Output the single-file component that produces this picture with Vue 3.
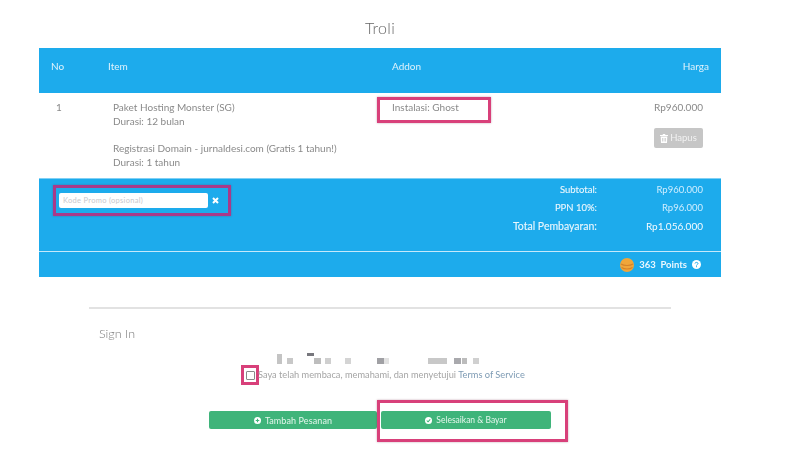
<script setup>
const blocks = [
  { w: 5, h: 10, m: 0, c: '#c4c4c4' },
  { w: 6, h: 6, m: 5, c: '#c8c8c8' },
  { w: 7, h: 3, m: 14, c: '#77777d', top: true },
  { w: 7, h: 6, m: 0, c: '#bdbdbd' },
  { w: 6, h: 6, m: 4, c: '#cfcfcf' },
  { w: 6, h: 6, m: 14, c: '#d4d4d4' },
  { w: 7, h: 6, m: 26, c: '#a0a0a4' },
  { w: 5, h: 6, m: 0, c: '#e2e2e2' },
  { w: 19, h: 6, m: 39, c: '#c8c8c8' },
  { w: 7, h: 6, m: 7, c: '#a9a9ad' },
  { w: 5, h: 6, m: 1, c: '#bcbcbc' },
  { w: 6, h: 6, m: 6, c: '#d0d0d0' }
]
</script>

<template>
  <div class="page">
    <h1 class="title">Troli</h1>

    <section class="cart">
      <div class="row head">
        <div class="c-no">No</div>
        <div class="c-item">Item</div>
        <div class="c-addon">Addon</div>
        <div class="c-price">Harga</div>
      </div>

      <div class="row body">
        <div class="c-no num">1</div>
        <div class="c-item item-text">
          <p>Paket Hosting Monster (SG)<br />Durasi: 12 bulan</p>
          <p>Registrasi Domain - jurnaldesi.com (Gratis 1 tahun!)<br />Durasi: 1 tahun</p>
        </div>
        <div class="c-addon addon-text">
          <span class="mark mark-addon"></span>
          Instalasi: Ghost
        </div>
        <div class="c-price price-cell">
          <div>Rp960.000</div>
          <button class="hapus" type="button">
            <svg width="8" height="9" viewBox="0 0 8 9"><path fill="#fff" d="M3 0h2l.5 1H8v1H0V1h2.5zM.7 2.6h6.600L7 9H1zM2.300 4v3.600h.7V4zm1.400 0v3.600h.7V4zm1.300 0v3.600h.7V4z" /></svg>
            Hapus
          </button>
        </div>
      </div>

      <div class="totals">
        <div class="promo">
          <span class="mark mark-promo"></span>
          <div class="promo-input">Kode Promo (opsional)</div>
          <svg class="promo-x" width="7" height="7" viewBox="0 0 7 7"><path d="M1 1l5 5M6 1L1 6" stroke="#fff" stroke-width="2" fill="none" /></svg>
        </div>
        <div class="sums">
          <div class="sum"><span>Subtotal:</span><span class="val">Rp960.000</span></div>
          <div class="sum"><span>PPN 10%:</span><span class="val">Rp96.000</span></div>
          <div class="sum big"><span>Total Pembayaran:</span><span class="val">Rp1.056.000</span></div>
        </div>
      </div>

      <div class="points">
        <svg class="coin" width="14" height="14" viewBox="0 0 14 14">
          <circle cx="7" cy="7" r="7" fill="#f0a63a" />
          <path d="M1 6c3 2 9 2 12 0M1.500 9.500c3 2 8 2 11 0" stroke="#d5822a" stroke-width="1.200" fill="none" />
        </svg>
        <span class="pts-text">363&nbsp; Points</span>
        <svg class="help" width="9" height="9" viewBox="0 0 9 9">
          <circle cx="4.500" cy="4.500" r="4.500" fill="#fff" />
          <path d="M3 3.500c0-1.500 3-1.500 3 0 0 1-1.500 1-1.500 2" stroke="#1dabec" stroke-width="1" fill="none" />
          <rect x="4" y="6.200" width="1" height="1" fill="#1dabec" />
        </svg>
      </div>
    </section>

    <section class="lower">
      <h2 class="signin">Sign In</h2>
      <div class="pixels">
        <i
          v-for="(b, i) in blocks"
          :key="i"
          :class="{ up: b.top }"
          :style="{ width: b.w + 'px', height: b.h + 'px', marginLeft: b.m + 'px', background: b.c }"
        ></i>
      </div>
      <div class="tos">
        <span class="check-wrap"><span class="check"></span></span>
        <span>Saya telah membaca, memahami, dan menyetujui <a>Terms of Service</a></span>
      </div>
      <div class="actions">
        <button class="btn add" type="button">
          <svg width="7" height="7" viewBox="0 0 8 8"><circle cx="4" cy="4" r="4" fill="#fff" /><path d="M4 2v4M2 4h4" stroke="#3fb47a" stroke-width="1.300" /></svg>
          Tambah Pesanan
        </button>
        <button class="btn pay" type="button">
          <span class="mark mark-pay"></span>
          <svg width="7" height="7" viewBox="0 0 8 8"><circle cx="4" cy="4" r="4" fill="#fff" /><path d="M2 4l1.500 1.500L6 2.700" stroke="#3fb47a" stroke-width="1.200" fill="none" /></svg>
          Selesaikan &amp; Bayar
        </button>
      </div>
    </section>
  </div>
</template>

<style>
html, body { margin: 0; background: #fff; }
</style>

<style scoped>
.page {
  width: 800px;
  height: 453px;
  overflow: hidden;
  box-sizing: border-box;
  padding: 0 79px 0 39px;
  font-family: Lato, "Open Sans", sans-serif;
  color: #8a8a8a;
  filter: blur(0.5px);
}
.title {
  margin: 0;
  height: 48px;
  padding-top: 18px;
  box-sizing: border-box;
  text-align: center;
  font-size: 16px;
  line-height: 20px;
  font-weight: 300;
  color: #666;
  letter-spacing: 0.3px;
}
.cart { width: 682px; }
.row { display: flex; font-size: 10px; line-height: 14px; }
.c-no { width: 69px; padding-left: 12px; box-sizing: border-box; }
.c-item { width: 284px; }
.c-addon { width: 199px; position: relative; }
.c-price { width: 130px; text-align: right; box-sizing: border-box; padding-right: 12px; }

.head { background: #1dabec; height: 45px; padding-top: 11px; box-sizing: border-box; color: #dff2fc; }
.body { height: 85px; padding-top: 7px; box-sizing: border-box; color: #8a8a8a; }
.num { padding-left: 17px; }
.item-text { padding-left: 5px; box-sizing: border-box; }
.item-text p { margin: 0 0 13px; }
.price-cell { padding-right: 18px; }
.mark {
  position: absolute;
  border: 3px solid #d8407a;
  box-sizing: border-box;
  box-shadow: 0 0 2px rgba(120, 40, 70, 0.4);
}
.mark-addon { left: -15px; top: -3px; width: 114px; height: 26px; }
.hapus {
  margin-top: 14px;
  width: 49px;
  height: 20px;
  padding: 0;
  border: 0;
  border-radius: 2px;
  background: #c6c6c6;
  color: #f2f2f2;
  font: inherit;
  font-size: 9.500px;
  display: inline-flex;
  align-items: center;
  justify-content: center;
  gap: 2px;
}

.totals {
  background: #1dabec;
  height: 73px;
  display: flex;
  justify-content: space-between;
  box-sizing: border-box;
  border-top: 1px solid #7fd0f5;
}
.promo {
  position: relative;
  margin: 14px 0 0 20px;
  display: flex;
  align-items: center;
  height: 15px;
  gap: 4px;
}
.mark-promo { left: -6px; top: -8px; width: 178px; height: 31px; border-color: #a93a8a; }
.promo-input {
  width: 149px;
  height: 15px;
  background: #fff;
  border-radius: 2px;
  font-size: 7.500px;
  line-height: 15px;
  padding-left: 4px;
  box-sizing: border-box;
  color: #c8c8cc;
  letter-spacing: 0.3px;
}
.sums { padding: 2px 18px 0 0; color: #eaf7fe; font-size: 9.500px; line-height: 18px; }
.sum { display: flex; justify-content: flex-end; -webkit-text-stroke: 0.1px #eaf7fe; }
.sum .val { width: 106px; text-align: right; color: #cfeeff; -webkit-text-stroke: 0; }
.big { font-size: 10.500px; }
.big .val { color: #f4fbff; font-size: 10px; }

.points {
  height: 25px;
  background: #1dabec;
  border-top: 1px solid #c5e9fb;
  display: flex;
  align-items: center;
  justify-content: flex-end;
  padding-right: 20px;
  gap: 5px;
  color: #eaf7fe;
  font-size: 9.500px;
  font-weight: 700;
}

.lower {
  margin: 30px 0 0 50px;
  width: 582px;
  border-top: 2px solid #e2e2e2;
  height: 140px;
}
.signin {
  margin: 17px 0 0 10px;
  font-size: 12.500px;
  line-height: 16px;
  font-weight: 300;
  color: #7a7a7a;
}
.pixels {
  margin: 11px 0 0 188px;
  height: 11px;
  display: flex;
  align-items: flex-end;
}
.pixels i { display: block; flex: none; }
.pixels i.up { align-self: flex-start; }
.tos {
  margin: 1px 0 0 152px;
  display: flex;
  align-items: center;
  font-size: 9.250px;
  line-height: 14px;
  color: #a5a5a5;
}
.tos a { color: #7e9bb4; }
.check-wrap {
  width: 18px;
  height: 20px;
  border: 3px solid #d8407a;
  box-sizing: border-box;
  display: flex;
  align-items: center;
  justify-content: center;
  flex: none;
  margin-right: -1px;
}
.check {
  width: 7px;
  height: 7px;
  border: 1px solid #8a8a8a;
  border-radius: 1px;
}
.actions {
  margin: 26px 0 0 120px;
  display: flex;
  gap: 4px;
}
.btn {
  height: 18px;
  padding: 0;
  border: 0;
  border-radius: 2px;
  background: #3fb47a;
  color: #e4f6ec;
  font: inherit;
  display: flex;
  align-items: center;
  justify-content: center;
  gap: 4px;
}
.add { width: 168px; font-size: 9px; letter-spacing: 0.1px; }
.pay { width: 170px; position: relative; font-size: 8.500px; }
.mark-pay { left: -4px; top: -11px; width: 191px; height: 42px; }
</style>
